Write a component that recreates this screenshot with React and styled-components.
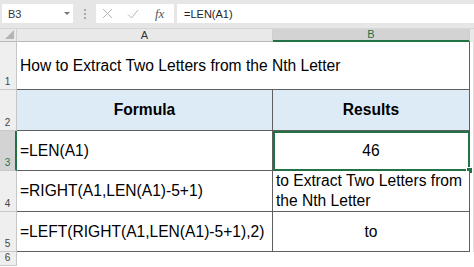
import React from 'react';
import styled, { createGlobalStyle, css } from 'styled-components';

const GREEN = '#217346';
const LINE = '#5f5f5f';

const Global = createGlobalStyle`
  html, body { margin: 0; padding: 0; background: #fff; }
  body { width: 474px; height: 267px; overflow: hidden; font-family: "Liberation Sans", Arial, sans-serif; }
`;

// --- Barra de fórmulas ---
const Toolbar = styled.div`
  height: 29px;
  background: #e6e6e6;
  border-bottom: 1px solid #d6d6d6;
  display: flex;
  align-items: flex-start;
  padding: 4px 0 0 2px;
  box-sizing: border-box;
`;

const NameBox = styled.div`
  width: 71px;
  height: 19px;
  background: #fff;
  display: flex;
  align-items: center;
  justify-content: space-between;
  padding: 0 3px 0 6px;
  box-sizing: border-box;
  font-size: 11px;
  color: #333;
`;

const Caret = styled.span`
  width: 0;
  height: 0;
  border-left: 3px solid transparent;
  border-right: 3px solid transparent;
  border-top: 3px solid #777;
`;

const Grip = styled.div`
  width: 23px;
  height: 19px;
  display: flex;
  flex-direction: column;
  align-items: center;
  justify-content: center;
  gap: 2px;
  span {
    width: 2px;
    height: 2px;
    background: #a8a8a8;
  }
`;

const ButtonBox = styled.div`
  width: 78px;
  height: 19px;
  background: #fff;
  display: flex;
  align-items: center;
  padding-left: 6px;
  gap: 14px;
  box-sizing: border-box;
`;

const Fx = styled.span`
  font-family: "Liberation Serif", "Times New Roman", serif;
  font-style: italic;
  font-size: 13px;
  color: #555;
  margin-left: 2px;
`;

const FormulaInput = styled.div`
  flex: 1;
  height: 19px;
  margin-left: 3px;
  background: #fff;
  display: flex;
  align-items: center;
  padding-left: 7px;
  font-size: 11px;
  color: #222;
`;

// --- Planilha ---
const Sheet = styled.div`
  display: grid;
  grid-template-columns: 17px 256px 197px 4px;
  grid-template-rows: 13px 48px 41px 40px 41px 40px 14px;
`;

const Corner = styled.div`
  background: #e9e9e9;
  border-right: 1px solid #cfcfcf;
  border-bottom: 1px solid #b8b8b8;
  box-sizing: border-box;
  display: flex;
  align-items: flex-end;
  justify-content: flex-end;
  padding: 0 2px 2px 0;
`;

const ColHead = styled.div`
  background: ${p => (p.$active ? '#d3d3d3' : '#e9e9e9')};
  color: ${p => (p.$active ? GREEN : '#333')};
  border-right: 1px solid #cfcfcf;
  border-bottom: ${p => (p.$active ? `2px solid ${GREEN}` : '1px solid #b8b8b8')};
  box-sizing: border-box;
  font-size: 11px;
  display: flex;
  align-items: center;
  justify-content: center;
  line-height: 1;
`;

const Filler = styled.div`
  background: ${p => p.$bg || '#fff'};
  border-bottom: ${p => p.$line ? '1px solid #d4d4d4' : 'none'};
  box-sizing: border-box;
`;

const RowHead = styled.div`
  background: ${p => (p.$active ? '#d3d3d3' : '#efefef')};
  color: ${p => (p.$active ? GREEN : '#444')};
  border-right: ${p => (p.$active ? `2px solid ${GREEN}` : '1px solid #c6c6c6')};
  border-bottom: 1px solid #c9c9c9;
  box-sizing: border-box;
  font-size: 10px;
  display: flex;
  align-items: flex-end;
  justify-content: center;
  padding-bottom: 2px;
  padding-right: ${p => (p.$active ? '0' : '1px')};
  line-height: 1;
`;

const Cell = styled.div`
  position: relative;
  grid-column: ${p => p.$span ? 'span 2' : 'auto'};
  background: ${p => (p.$head ? '#ddebf7' : '#fff')};
  border-right: 1px solid ${LINE};
  border-bottom: 1px solid ${LINE};
  box-sizing: border-box;
  display: flex;
  align-items: center;
  justify-content: ${p => (p.$center ? 'center' : 'flex-start')};
  text-align: ${p => (p.$center ? 'center' : 'left')};
  padding: 0 3px;
  font-size: 15.6px;
  font-weight: ${p => (p.$head ? 700 : 400)};
  line-height: 20px;
  color: #000;
  ${p => p.$selected && css`
    outline: 2px solid ${GREEN};
    outline-offset: -2px;
  `}
`;

const Handle = styled.span`
  position: absolute;
  right: -4px;
  bottom: -4px;
  width: 5px;
  height: 5px;
  background: ${GREEN};
  border: 1px solid #fff;
`;

const EmptyCell = styled.div`
  border-right: 1px solid #e0e0e0;
  box-sizing: border-box;
`;

const CrossIcon = () => (
  <svg width="11" height="11" viewBox="0 0 11 11">
    <path d="M1 1L10 10M10 1L1 10" stroke="#b5b5b5" strokeWidth="1" fill="none" />
  </svg>
);

const CheckIcon = () => (
  <svg width="12" height="10" viewBox="0 0 12 10">
    <path d="M1 5.5L4.5 9L11 1" stroke="#b5b5b5" strokeWidth="1" fill="none" />
  </svg>
);

const CornerMark = () => (
  <svg width="9" height="9" viewBox="0 0 9 9">
    <polygon points="9,0 9,9 0,9" fill="#b4b4b4" />
  </svg>
);

const rows = [
  { n: 2, a: 'Formula', b: 'Results', head: true },
  { n: 3, a: '=LEN(A1)', b: '46', selected: true },
  { n: 4, a: '=RIGHT(A1,LEN(A1)-5+1)', b: 'to Extract Two Letters from the Nth Letter', left: true },
  { n: 5, a: '=LEFT(RIGHT(A1,LEN(A1)-5+1),2)', b: 'to' },
];

export default function App() {
  return (
    <>
      <Global />
      <Toolbar>
        <NameBox>B3<Caret /></NameBox>
        <Grip><span /><span /><span /></Grip>
        <ButtonBox>
          <CrossIcon />
          <CheckIcon />
          <Fx>fx</Fx>
        </ButtonBox>
        <FormulaInput>=LEN(A1)</FormulaInput>
      </Toolbar>

      <Sheet>
        <Corner><CornerMark /></Corner>
        <ColHead>A</ColHead>
        <ColHead $active>B</ColHead>
        <Filler $bg="#e9e9e9" />

        <RowHead>1</RowHead>
        <Cell $span>How to Extract Two Letters from the Nth Letter</Cell>
        <EmptyCell />

        {rows.map(r => (
          <React.Fragment key={r.n}>
            <RowHead $active={r.selected}>{r.n}</RowHead>
            <Cell $head={r.head} $center={r.head}>{r.a}</Cell>
            <Cell $head={r.head} $center={!r.left} $selected={r.selected}>
              {r.b}
              {r.selected && <Handle />}
            </Cell>
            <EmptyCell />
          </React.Fragment>
        ))}

        <RowHead>6</RowHead>
        <Filler />
        <Filler />
        <Filler />
      </Sheet>
    </>
  );
}
